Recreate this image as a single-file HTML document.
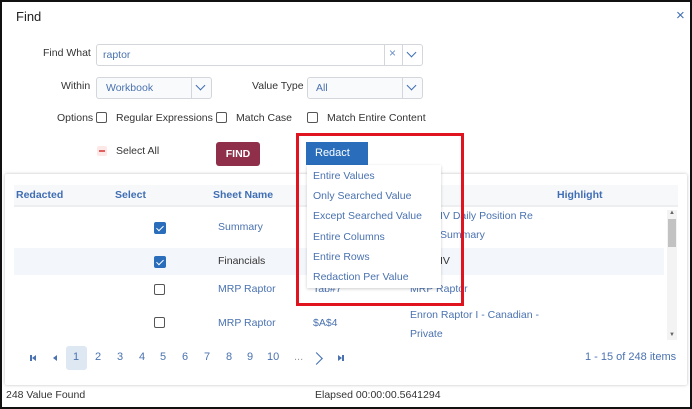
<!DOCTYPE html>
<html><head><meta charset="utf-8"><style>
*{box-sizing:border-box;margin:0;padding:0}
body{width:692px;height:409px;background:#fff;font-family:"Liberation Sans",sans-serif;font-size:10.5px;color:#333;position:relative;overflow:hidden}
.frame{position:absolute;left:0;top:0;width:692px;height:409px;border:2px solid #111;z-index:5}
.a{position:absolute;white-space:nowrap}
.blue{color:#4a72b0}
.box{position:absolute;border:1px solid #d3d6da;border-radius:3px;background:#fff}
.chev{position:absolute;width:7px;height:7px;border-right:1.5px solid #3f6eb5;border-bottom:1.5px solid #3f6eb5;transform:rotate(45deg)}
.cb{position:absolute;width:11px;height:11px;border:1.3px solid #555;border-radius:2px;background:#fff}
.cbc{position:absolute;width:12px;height:12px;border-radius:2px;background:#2a6ebb}
.cbc:after{content:"";position:absolute;left:4px;top:1.5px;width:3px;height:6px;border-right:1.5px solid #fff;border-bottom:1.5px solid #fff;transform:rotate(45deg)}
.hd{font-weight:bold;color:#3f6eb5}
.pg{position:absolute;top:351px;color:#4a72b0;font-size:11px}
.tl{position:absolute;width:0;height:0;border-top:3px solid transparent;border-bottom:3px solid transparent;border-right:4px solid #4a72b0}
.tr{position:absolute;width:0;height:0;border-top:3px solid transparent;border-bottom:3px solid transparent;border-left:4px solid #4a72b0}
.bar{position:absolute;width:1.5px;height:6px;background:#4a72b0}
</style></head><body>
<div class="frame"></div>
<div class="a" style="left:16px;top:9px;font-size:13px;color:#222">Find</div>
<div class="a" style="left:676px;top:7px;font-size:15px;color:#3f6eb5">×</div>

<div class="a" style="left:43px;top:47px">Find What</div>
<div class="box" style="left:96px;top:44px;width:327px;height:22px"></div>
<div class="a blue" style="left:103px;top:49px">raptor</div>
<div style="position:absolute;left:384px;top:44px;width:1px;height:22px;background:#d3d6da"></div>
<div style="position:absolute;left:402px;top:44px;width:1px;height:22px;background:#d3d6da"></div>
<div class="a" style="left:389px;top:46px;color:#6a8fc7;font-size:12px">×</div>
<div class="chev" style="left:408px;top:49px"></div>

<div class="a" style="left:61px;top:80px">Within</div>
<div class="box" style="left:96px;top:77px;width:116px;height:22px;background:#f9fafb"></div>
<div class="a blue" style="left:106px;top:82px">Workbook</div>
<div style="position:absolute;left:191px;top:77px;width:1px;height:22px;background:#d3d6da"></div>
<div class="chev" style="left:197px;top:82px"></div>
<div class="a" style="left:252px;top:80px">Value Type</div>
<div class="box" style="left:307px;top:77px;width:116px;height:22px;background:#f9fafb"></div>
<div class="a blue" style="left:316px;top:82px">All</div>
<div style="position:absolute;left:402px;top:77px;width:1px;height:22px;background:#d3d6da"></div>
<div class="chev" style="left:408px;top:82px"></div>

<div class="a" style="left:57px;top:112px">Options</div>
<div class="cb" style="left:96px;top:112px"></div>
<div class="a" style="left:116px;top:112px">Regular Expressions</div>
<div class="cb" style="left:216px;top:112px"></div>
<div class="a" style="left:236px;top:112px">Match Case</div>
<div class="cb" style="left:307px;top:112px"></div>
<div class="a" style="left:327px;top:112px">Match Entire Content</div>

<div style="position:absolute;left:97px;top:146px;width:10px;height:10px;background:#fde8e8;border-radius:2px"></div>
<div style="position:absolute;left:99px;top:150px;width:6px;height:2px;background:#e06060"></div>
<div class="a" style="left:116px;top:145px">Select All</div>
<div style="position:absolute;left:216px;top:142px;width:44px;height:24px;background:#8f2f4a;border-radius:3px;color:#fff;font-weight:bold;font-size:10.5px;text-align:center;line-height:24px">FIND</div>

<!-- table card -->
<div style="position:absolute;left:5px;top:174px;width:682px;height:211px;background:#fff;box-shadow:0 0 3px rgba(0,0,0,.25);border-radius:2px"></div>
<div style="position:absolute;left:14px;top:185px;width:664px;height:22px;background:#f7f8f9;border-bottom:2px solid #eceef0"></div>
<div class="a hd" style="left:16px;top:189px">Redacted</div>
<div class="a hd" style="left:115px;top:189px">Select</div>
<div class="a hd" style="left:213px;top:189px">Sheet Name</div>
<div class="a hd" style="left:557px;top:189px">Highlight</div>

<div style="position:absolute;left:14px;top:248px;width:650px;height:27px;background:#f3f6fa"></div>
<div class="cbc" style="left:154px;top:222px"></div>
<div class="a blue" style="left:218px;top:221px">Summary</div>
<div class="a blue" style="left:440px;top:207px;line-height:19px">IV Daily Position Re<br>Summary</div>
<div class="cbc" style="left:154px;top:256px"></div>
<div class="a" style="left:218px;top:255px;color:#333">Financials</div>
<div class="a" style="left:440px;top:255px">IV</div>
<div class="cb" style="left:154px;top:284px"></div>
<div class="a blue" style="left:218px;top:283px">MRP Raptor</div>
<div class="a blue" style="left:410px;top:283px">MRP Raptor</div>
<div class="a blue" style="left:313px;top:283px">Tab#7</div>
<div class="cb" style="left:154px;top:317px"></div>
<div class="a blue" style="left:218px;top:317px">MRP Raptor</div>
<div class="a blue" style="left:313px;top:317px">$A$4</div>
<div class="a blue" style="left:410px;top:306px;line-height:19px">Enron Raptor I - Canadian -<br>Private</div>

<div style="position:absolute;left:667px;top:210px;width:10px;height:130px;background:#f3f3f3"></div>
<div style="position:absolute;left:668px;top:219px;width:8px;height:28px;background:#c2c2c2"></div>
<div class="a" style="left:669px;top:210px;font-size:6px;color:#666">▲</div>
<div class="a" style="left:669px;top:332px;font-size:6px;color:#666">▼</div>

<div class="bar" style="left:30px;top:355px"></div><div class="tl" style="left:32px;top:355px"></div>
<div class="tl" style="left:53px;top:355px"></div>
<div style="position:absolute;left:66px;top:346px;width:21px;height:24px;background:#dde8f3;border-radius:3px"></div>
<div class="pg" style="left:73px">1</div>
<div class="pg" style="left:95px">2</div>
<div class="pg" style="left:117px">3</div>
<div class="pg" style="left:139px">4</div>
<div class="pg" style="left:160px">5</div>
<div class="pg" style="left:182px">6</div>
<div class="pg" style="left:204px">7</div>
<div class="pg" style="left:226px">8</div>
<div class="pg" style="left:247px">9</div>
<div class="pg" style="left:267px">10</div>
<div class="pg" style="left:294px;color:#999">...</div>
<div class="chev" style="left:312px;top:354px;transform:rotate(-45deg);width:9px;height:9px"></div>
<div class="tr" style="left:338px;top:355px"></div><div class="bar" style="left:342px;top:355px"></div>
<div class="pg" style="left:585px">1 - 15 of 248 items</div>

<div class="a" style="left:6px;top:389px">248 Value Found</div>
<div class="a" style="left:315px;top:389px">Elapsed 00:00:00.5641294</div>

<!-- redact -->
<div style="position:absolute;left:306px;top:142px;width:62px;height:23px;background:#2a6ebb;color:#fff;font-size:11px;line-height:23px;padding-left:9px">Redact</div>
<div style="position:absolute;left:307px;top:165px;width:134px;height:123px;background:#fff;box-shadow:0 1px 3px rgba(0,0,0,.2)"></div>
<div class="a blue" style="left:313px;top:170px">Entire Values</div>
<div class="a blue" style="left:313px;top:190px">Only Searched Value</div>
<div class="a blue" style="left:313px;top:210px">Except Searched Value</div>
<div class="a blue" style="left:313px;top:231px">Entire Columns</div>
<div class="a blue" style="left:313px;top:251px">Entire Rows</div>
<div class="a blue" style="left:313px;top:271px">Redaction Per Value</div>
<div style="position:absolute;left:296px;top:133px;width:168px;height:173px;border:3px solid #e0141e"></div>
</body></html>
